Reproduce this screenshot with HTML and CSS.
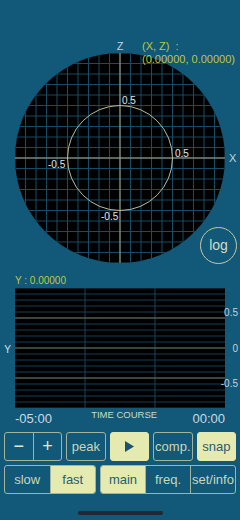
FILE: index.html
```html
<!DOCTYPE html>
<html>
<head>
<meta charset="utf-8">
<link rel="stylesheet" href="styles.css">
</head>
<body>
<div class="app">
  <section class="scope">
    <svg class="scope-svg" width="240" height="274" viewBox="0 0 240 274">
      <defs>
        <pattern id="grid" patternUnits="userSpaceOnUse" x="114.75" y="152.75" width="10.5" height="10.5">
          <path d="M5.25 0 V10.5 M0 5.25 H10.5" stroke="#174c66" stroke-width="1" fill="none"/>
        </pattern>
        <clipPath id="disc"><circle cx="120" cy="158" r="105"/></clipPath>
      </defs>
      <circle cx="120" cy="158" r="105" fill="#000"/>
      <rect x="0" y="0" width="240" height="274" fill="url(#grid)" clip-path="url(#disc)"/>
      <g clip-path="url(#disc)">
        <line x1="0" y1="158" x2="240" y2="158" class="axis"/>
      </g>
      <line x1="120" y1="53" x2="120" y2="263" class="axis"/>
      <circle cx="120" cy="158" r="52.5" class="unit"/>
      <text x="120" y="50" class="lbl-axis" text-anchor="middle">Z</text>
      <text x="229" y="162" class="lbl-axis">X</text>
      <text x="122" y="104" class="lbl">0.5</text>
      <text x="175" y="157" class="lbl">0.5</text>
      <text x="48" y="168" class="lbl">-0.5</text>
      <text x="101" y="220" class="lbl">-0.5</text>
      <text x="142" y="50" class="lbl-val" xml:space="preserve">(X, Z)  :</text>
      <text x="142" y="63" class="lbl-val">(0.00000, 0.00000)</text>
    </svg>
    <button class="log">log</button>
  </section>

  <section class="course">
    <div class="readout">Y : 0.00000</div>
    <div class="chart-row">
      <div class="ylabel">Y</div>
      <svg class="chart" width="210" height="120" viewBox="0 0 210 120">
        <defs>
          <pattern id="hlines" patternUnits="userSpaceOnUse" x="0" y="-0.5" width="210" height="6">
            <line x1="0" y1="0.5" x2="210" y2="0.5" stroke="#143e52" stroke-width="1"/>
          </pattern>
        </defs>
        <rect width="210" height="120" fill="#000"/>
        <rect width="210" height="120" fill="url(#hlines)"/>
        <line x1="70" y1="0" x2="70" y2="120" class="vline"/>
        <line x1="140" y1="0" x2="140" y2="120" class="vline"/>
        <line x1="0" y1="30" x2="210" y2="30" class="hmain"/>
        <line x1="0" y1="60" x2="210" y2="60" class="hmain"/>
        <line x1="0" y1="90" x2="210" y2="90" class="hmain"/>
      </svg>
      <div class="yticks">
        <span class="tick t1">0.5</span>
        <span class="tick t2">0</span>
        <span class="tick t3">-0.5</span>
      </div>
    </div>
    <div class="time-row">
      <span class="time">-05:00</span>
      <span class="caption">TIME COURSE</span>
      <span class="time">00:00</span>
    </div>
  </section>

  <section class="controls">
    <div class="row">
      <div class="group g-pm">
        <button class="btn">&minus;</button>
        <button class="btn">+</button>
      </div>
      <button class="btn single w-peak">peak</button>
      <button class="btn single on w-play"><svg width="9" height="11" viewBox="0 0 9 11"><path d="M0 0 L9 5.5 L0 11 Z" fill="#1c5470"/></svg></button>
      <button class="btn single w-comp">comp.</button>
      <button class="btn single on w-snap">snap</button>
    </div>
    <div class="row">
      <div class="group g-speed">
        <button class="btn">slow</button>
        <button class="btn on">fast</button>
      </div>
      <div class="group g-mode">
        <button class="btn on">main</button>
        <button class="btn">freq.</button>
        <button class="btn">set/info</button>
      </div>
    </div>
  </section>

  <div class="home"><span class="bar"></span></div>
</div>
</body>
</html>
```
FILE: styles.css
```css
html, body {
  margin: 0;
  padding: 0;
  background: #115879;
}
body {
  font-family: "Liberation Sans", Arial, sans-serif;
  width: 240px;
  height: 520px;
  overflow: hidden;
}
.app {
  display: flex;
  flex-direction: column;
  width: 240px;
  height: 520px;
}
.scope {
  position: relative;
  height: 274px;
}
.scope-svg {
  display: block;
}
.axis {
  stroke: #a9a98a;
  stroke-width: 1;
}
.unit {
  fill: none;
  stroke: #bcbc98;
  stroke-width: 1;
}
.lbl {
  font-family: "Liberation Sans", Arial, sans-serif;
  font-size: 10px;
  fill: #e6e6e6;
}
.lbl-axis {
  font-family: "Liberation Sans", Arial, sans-serif;
  font-size: 11px;
  fill: #c6d4dc;
}
.lbl-val {
  font-family: "Liberation Sans", Arial, sans-serif;
  font-size: 11px;
  fill: #bfc83c;
  white-space: pre;
}
.log {
  position: absolute;
  left: 200px;
  top: 227px;
  width: 37px;
  height: 37px;
  border-radius: 50%;
  border: 1px solid #c8c8a0;
  background: transparent;
  color: #d4dcc4;
  font-family: "Liberation Sans", Arial, sans-serif;
  font-size: 14px;
  padding: 0 0 2px 0;
  box-sizing: border-box;
}
.course {
  display: flex;
  flex-direction: column;
}
.readout {
  height: 14px;
  line-height: 14px;
  padding-left: 15px;
  font-size: 10px;
  color: #bfc83c;
}
.chart-row {
  display: flex;
  height: 120px;
}
.ylabel {
  width: 15px;
  display: flex;
  align-items: center;
  justify-content: center;
  font-size: 10px;
  color: #d8e0e4;
  padding-top: 2px;
  box-sizing: border-box;
}
.chart {
  display: block;
}
.hmain {
  stroke: #6e6c50;
  stroke-width: 1;
}
.vline {
  stroke: #15445c;
  stroke-width: 1;
}
.yticks {
  position: relative;
  width: 15px;
}
.tick {
  position: absolute;
  right: 2px;
  font-size: 10px;
  color: #c8d0d4;
  line-height: 12px;
}
.t1 { top: 19px; }
.t2 { top: 55px; }
.t3 { top: 90px; }
.time-row {
  display: flex;
  justify-content: space-between;
  padding: 0 15px;
  height: 22px;
}
.time {
  font-size: 13px;
  color: #d0d8e0;
  line-height: 22px;
}
.caption {
  font-size: 9.5px;
  color: #c8dcc8;
  line-height: 14px;
  padding-left: 4px;
}
.controls {
  display: flex;
  flex-direction: column;
  gap: 4px;
  padding: 2px 4px 0 4px;
}
.row {
  display: flex;
  gap: 4px;
  height: 29px;
}
.btn {
  font-family: "Liberation Sans", Arial, sans-serif;
  font-size: 13px;
  color: #c9d8b4;
  background: transparent;
  border: none;
  padding: 0;
  margin: 0;
  display: flex;
  align-items: center;
  justify-content: center;
  height: 100%;
  white-space: nowrap;
}
.btn.on {
  background: #e5eab0;
  color: #2a5c70;
}
.single {
  border: 1px solid #a2b49a;
  border-radius: 3px;
  box-sizing: border-box;
}
.single.on {
  border-color: #e5eab0;
}
.group {
  display: flex;
  border: 1px solid #a2b49a;
  border-radius: 3px;
  overflow: hidden;
  box-sizing: border-box;
}
.group .btn + .btn {
  border-left: 1px solid #a2b49a;
}
.g-pm { width: 59px; }
.g-pm .btn { flex: 1; font-size: 18px; color: #e0e8d0; }
.w-peak { width: 40px; }
.w-play { width: 40px; }
.w-comp { width: 40px; }
.w-snap { width: 40px; }
.g-speed { width: 92px; }
.g-speed .btn { flex: 1; }
.g-mode { flex: 1; }
.g-mode .btn { flex: 1; }
.home {
  flex: 1;
  display: flex;
  align-items: flex-end;
  justify-content: center;
  padding-bottom: 5px;
}
.bar {
  width: 85px;
  height: 4px;
  border-radius: 2px;
  background: #1e2a30;
}
```
